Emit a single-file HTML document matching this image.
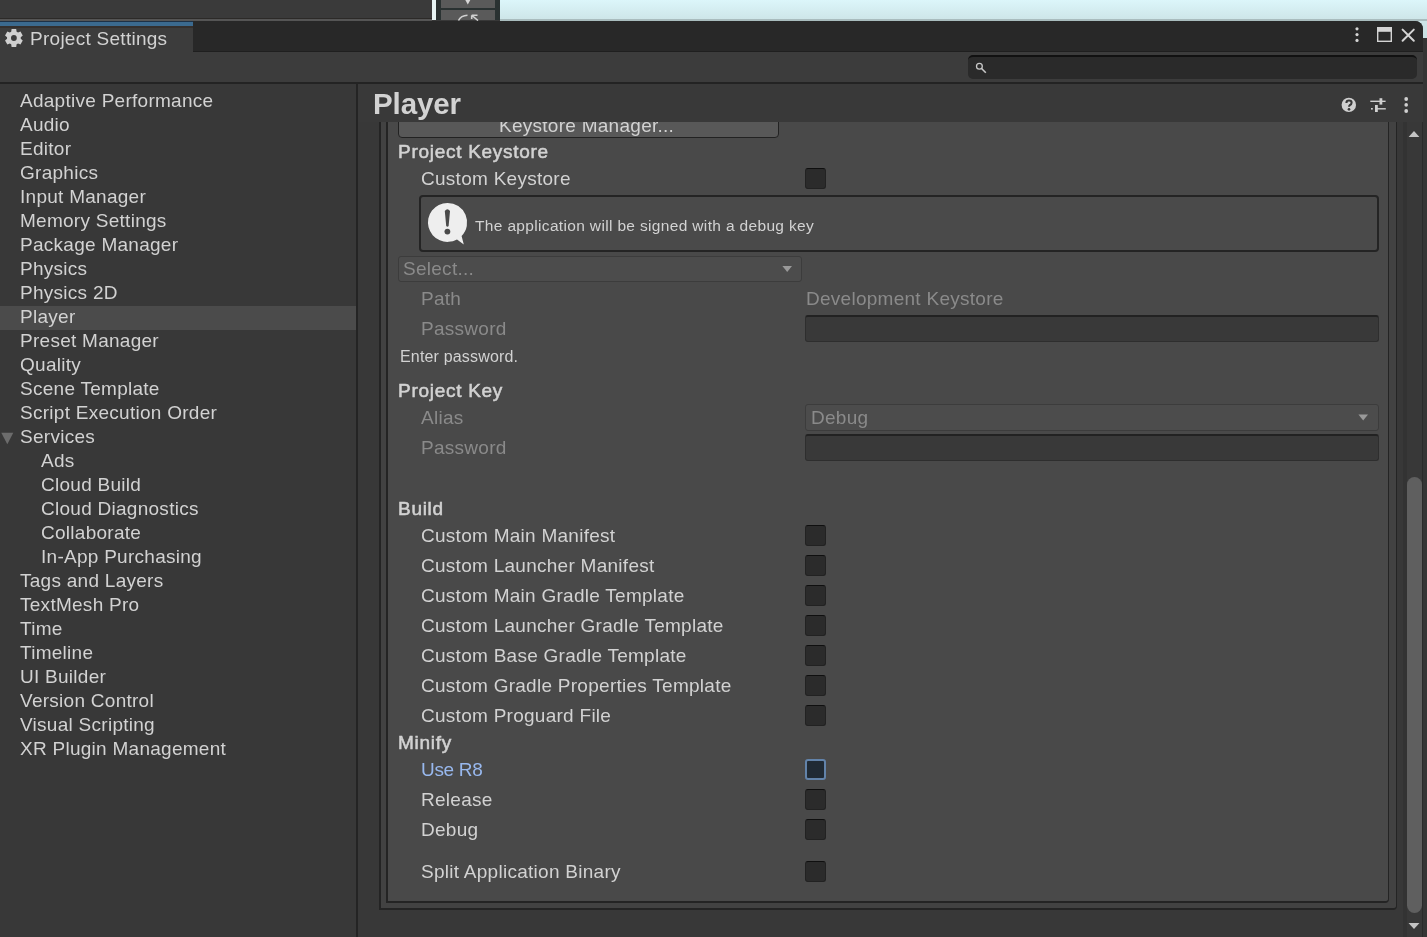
<!DOCTYPE html>
<html><head><meta charset="utf-8">
<style>
*{margin:0;padding:0;box-sizing:border-box}
html,body{width:1427px;height:937px;overflow:hidden;background:#383838;font-family:"Liberation Sans",sans-serif;color:#d2d2d2}
.a{position:absolute}
.t{position:absolute;will-change:transform;white-space:pre;font-size:19px;letter-spacing:0.27px;line-height:24px}
.b{font-weight:normal;letter-spacing:0.72px;-webkit-text-stroke:0.55px currentColor}
.dis{color:#8a8a8a}
.cb{position:absolute;left:805px;width:21px;height:21px;background:#2b2b2b;border:1px solid #222;border-top-color:#0f0f0f;border-radius:3px}
</style></head><body>
<div class="a" style="left:0;top:0;width:432px;height:20px;background:#3a3a3a"></div>
<div class="a" style="left:432px;top:0;width:4px;height:20px;background:#e6f4f4"></div>
<div class="a" style="left:436px;top:0;width:64px;height:20px;background:#2a3232"></div>
<div class="a" style="left:441px;top:0;width:54px;height:8px;background:#5a5a5a"></div>
<div class="a" style="left:441px;top:9.5px;width:54px;height:10.5px;background:#5a5a5a"></div>
<svg class="a" style="left:0;top:0" width="500" height="21"><path d="M465.3,0 L467.8,4.5 L470.3,0 Z" fill="#d8d8d8"/><path d="M458.5,20.5 Q461,15.5 467.5,15.2" stroke="#d0d0d0" stroke-width="1.6" fill="none"/><path d="M472,15.5 L478,20.5 M471.7,15.3 H477.5 M471.7,15.3 V19" stroke="#d0d0d0" stroke-width="1.6" fill="none"/></svg>
<div class="a" style="left:500px;top:0;width:927px;height:40px;background:linear-gradient(#dcf6fa,#cde5e8 50%,#c8dee0)"></div>
<div class="a" style="left:0;top:18px;width:432px;height:1px;background:#2c2a28"></div>
<div class="a" style="left:0;top:19px;width:432px;height:2px;background:#555"></div>
<div class="a" style="left:500px;top:19px;width:927px;height:2px;background:#a9bcbe"></div>
<div class="a" style="left:1423px;top:38px;width:4px;height:899px;background:#353535"></div>
<div class="a" style="left:0;top:21px;width:1423px;height:916px;background:#383838;border-top-right-radius:8px;overflow:hidden">
 <div class="a" style="left:0;top:0;width:1423px;height:31px;background:#282828"></div>
 <div class="a" style="left:0;top:0;width:193px;height:31px;background:#3c3c3c"></div>
 <div class="a" style="left:0;top:0;width:193px;height:1px;background:#1d3147"></div>
 <div class="a" style="left:0;top:1px;width:193px;height:4px;background:#3b6a8f"></div>
 <div class="a" style="left:0;top:5px;width:193px;height:2px;background:#34302e"></div>
 <div class="a" style="left:0;top:31px;width:1423px;height:30px;background:#3c3c3c"></div>
 <div class="a" style="left:193px;top:30px;width:1230px;height:1px;background:#1f1f1f"></div>
 <div class="a" style="left:0;top:61px;width:1423px;height:2px;background:#232323"></div>
</div>
<div class="t" style="left:29.5px;top:27px">Project Settings</div>
<div class="a" style="left:968px;top:55px;width:449px;height:24px;background:#2a2a2a;border-radius:5px;border-top:2px solid #111"></div>
<div class="a" style="left:0;top:306px;width:356px;height:24px;background:#4b4b4b"></div>
<div class="a" style="left:356px;top:84px;width:2px;height:853px;background:#242424"></div>
<div class="t" style="left:20px;top:89px">Adaptive Performance</div>
<div class="t" style="left:20px;top:113px">Audio</div>
<div class="t" style="left:20px;top:137px">Editor</div>
<div class="t" style="left:20px;top:161px">Graphics</div>
<div class="t" style="left:20px;top:185px">Input Manager</div>
<div class="t" style="left:20px;top:209px">Memory Settings</div>
<div class="t" style="left:20px;top:233px">Package Manager</div>
<div class="t" style="left:20px;top:257px">Physics</div>
<div class="t" style="left:20px;top:281px">Physics 2D</div>
<div class="t" style="left:20px;top:305px">Player</div>
<div class="t" style="left:20px;top:329px">Preset Manager</div>
<div class="t" style="left:20px;top:353px">Quality</div>
<div class="t" style="left:20px;top:377px">Scene Template</div>
<div class="t" style="left:20px;top:401px">Script Execution Order</div>
<div class="t" style="left:20px;top:425px">Services</div>
<div class="t" style="left:41px;top:449px">Ads</div>
<div class="t" style="left:41px;top:473px">Cloud Build</div>
<div class="t" style="left:41px;top:497px">Cloud Diagnostics</div>
<div class="t" style="left:41px;top:521px">Collaborate</div>
<div class="t" style="left:41px;top:545px">In-App Purchasing</div>
<div class="t" style="left:20px;top:569px">Tags and Layers</div>
<div class="t" style="left:20px;top:593px">TextMesh Pro</div>
<div class="t" style="left:20px;top:617px">Time</div>
<div class="t" style="left:20px;top:641px">Timeline</div>
<div class="t" style="left:20px;top:665px">UI Builder</div>
<div class="t" style="left:20px;top:689px">Version Control</div>
<div class="t" style="left:20px;top:713px">Visual Scripting</div>
<div class="t" style="left:20px;top:737px">XR Plugin Management</div>
<div class="a" style="left:358px;top:121px;width:1065px;height:816px;background:#383838"></div>
<div class="a" style="left:379px;top:100px;width:1018px;height:810px;background:#424242;border:1px solid #242424;border-left-width:2px;border-bottom-width:2px;border-bottom-right-radius:4px"></div>
<div class="a" style="left:386px;top:100px;width:1003px;height:803px;background:#494949;border:1px solid #242424;border-left-width:2px;border-bottom-width:2px;border-bottom-right-radius:4px"></div>
<div class="a" style="left:0;top:0;width:1427px;height:937px;clip-path:inset(122px 0 0 0)">
<div class="a" style="left:398px;top:114px;width:381px;height:24px;background:#585858;border:1px solid #222;border-radius:4px"></div>
<div class="t" style="left:499px;top:114px">Keystore Manager...</div>
<div class="t b" style="left:398px;top:140px">Project Keystore</div>
<div class="t" style="left:421px;top:167px">Custom Keystore</div>
<div class="cb" style="top:168px"></div>
<div class="a" style="left:419px;top:195px;width:960px;height:57px;border:2px solid #242424;border-radius:4px;background:#4a4a4a"></div>
<div class="t" style="left:475px;top:213.5px;font-size:15.5px;letter-spacing:0.34px">The application will be signed with a debug key</div>
<div class="a" style="left:398px;top:256px;width:404px;height:26px;background:#4c4c4c;border:1px solid #3c3c3c;border-radius:3px"></div>
<div class="t dis" style="left:403px;top:257px">Select...</div>
<div class="t dis" style="left:421px;top:287px">Path</div>
<div class="t dis" style="left:806px;top:287px">Development Keystore</div>
<div class="t dis" style="left:421px;top:317px">Password</div>
<div class="a" style="left:805px;top:315px;width:574px;height:27px;background:#393939;border:1px solid #2e2e2e;border-top:2px solid #222;border-radius:3px"></div>
<div class="t" style="left:400px;top:345px;font-size:16px;letter-spacing:0.17px">Enter password.</div>
<div class="t b" style="left:398px;top:379px">Project Key</div>
<div class="t dis" style="left:421px;top:406px">Alias</div>
<div class="a" style="left:805px;top:404px;width:574px;height:27px;background:#4c4c4c;border:1px solid #3c3c3c;border-radius:3px"></div>
<div class="t dis" style="left:811px;top:406px">Debug</div>
<div class="t dis" style="left:421px;top:436px">Password</div>
<div class="a" style="left:805px;top:434px;width:574px;height:27px;background:#393939;border:1px solid #2e2e2e;border-top:2px solid #222;border-radius:3px"></div>
<div class="t b" style="left:398px;top:497px">Build</div>
<div class="t" style="left:421px;top:524px">Custom Main Manifest</div>
<div class="cb" style="top:525px"></div>
<div class="t" style="left:421px;top:554px">Custom Launcher Manifest</div>
<div class="cb" style="top:555px"></div>
<div class="t" style="left:421px;top:584px">Custom Main Gradle Template</div>
<div class="cb" style="top:585px"></div>
<div class="t" style="left:421px;top:614px">Custom Launcher Gradle Template</div>
<div class="cb" style="top:615px"></div>
<div class="t" style="left:421px;top:644px">Custom Base Gradle Template</div>
<div class="cb" style="top:645px"></div>
<div class="t" style="left:421px;top:674px">Custom Gradle Properties Template</div>
<div class="cb" style="top:675px"></div>
<div class="t" style="left:421px;top:704px">Custom Proguard File</div>
<div class="cb" style="top:705px"></div>
<div class="t b" style="left:398px;top:731px">Minify</div>
<div class="t" style="left:421px;top:758px;color:#98b8ee;letter-spacing:-0.3px">Use R8</div>
<div class="cb" style="top:759px;border:2px solid #6283aa;background:#202a34"></div>
<div class="t" style="left:421px;top:788px">Release</div>
<div class="cb" style="top:789px"></div>
<div class="t" style="left:421px;top:818px">Debug</div>
<div class="cb" style="top:819px"></div>
<div class="t" style="left:421px;top:860px">Split Application Binary</div>
<div class="cb" style="top:861px"></div>
<svg class="a" style="left:0;top:0" width="1427" height="937" viewBox="0 0 1427 937">
  <path d="M447.4,202.9 a19.5,19.5 0 1,0 9.6,36.5 l6.8,5.2 l-2.2,-8.6 a19.5,19.5 0 0,0 -14.2,-33.1 z" fill="#eeeeee"/>
  <path d="M444.8,211 Q447.4,207.5 450,211 L448.6,226 Q447.4,227.5 446.2,226 z" fill="#4a4a4a"/>
  <circle cx="447.4" cy="231.6" r="2.9" fill="#4a4a4a"/>
  <path d="M782.4,266 H792 L787.2,272 z" fill="#999"/>
  <path d="M1358.4,414.5 H1368 L1363.2,420.5 z" fill="#999"/>
</svg>
</div>
<div class="a" style="left:358px;top:84px;width:1065px;height:38px;background:#393939"></div>
<div class="t" style="left:373px;top:87px;font-size:29.5px;line-height:34px;font-weight:bold;letter-spacing:-0.1px">Player</div>
<div class="a" style="left:1403px;top:122px;width:4px;height:815px;background:#333333"></div>
<div class="a" style="left:1422px;top:122px;width:1px;height:815px;background:#2a2a2a"></div>
<div class="a" style="left:1407px;top:477px;width:15px;height:436px;background:#5f5f5f;border-radius:8px"></div>
<svg class="a" style="left:0;top:0" width="1427" height="937" viewBox="0 0 1427 937">
  <path d="M11.20,31.65 L11.60,29.09 L16.20,29.09 L16.60,31.65 L18.05,32.49 L20.46,31.55 L22.76,35.54 L20.75,37.16 L20.75,38.84 L22.76,40.46 L20.46,44.45 L18.05,43.51 L16.60,44.35 L16.20,46.91 L11.60,46.91 L11.20,44.35 L9.75,43.51 L7.34,44.45 L5.04,40.46 L7.05,38.84 L7.05,37.16 L5.04,35.54 L7.34,31.55 L9.75,32.49 Z M11.00,38.00 a2.90,2.90 0 1,0 5.80,0 a2.90,2.90 0 1,0 -5.80,0 Z" fill="#d0d0d0" fill-rule="evenodd"/>
  <g fill="#d4d4d4">
    <circle cx="1357" cy="28.8" r="1.6"/><circle cx="1357" cy="34.6" r="1.6"/><circle cx="1357" cy="40.4" r="1.6"/>
  </g>
  <rect x="1377.7" y="27.7" width="13.6" height="13.6" fill="none" stroke="#d4d4d4" stroke-width="1.4"/>
  <rect x="1377" y="27" width="15" height="4.8" fill="#d4d4d4"/>
  <path d="M1402.6,29.6 L1413.8,40.8 M1413.8,29.6 L1402.6,40.8" stroke="#d4d4d4" stroke-width="2" stroke-linecap="round"/>
  <circle cx="979.4" cy="66.3" r="2.9" fill="none" stroke="#c8c8c8" stroke-width="1.3"/>
  <path d="M981.6,68.5 L985.8,72.7" stroke="#c8c8c8" stroke-width="1.6"/>
  <path d="M1.3,432.8 L13.3,432.8 L7.3,444.3 z" fill="#6c6c6c"/>
  <circle cx="1348.8" cy="104.9" r="7.2" fill="#d0d0d0"/>
  <path d="M1346.4,102.9 Q1346.4,100.5 1349,100.5 Q1351.6,100.5 1351.6,102.7 Q1351.5,104.4 1349.6,105.3 Q1349.1,105.6 1349.1,106.8" fill="none" stroke="#393939" stroke-width="2.1"/><circle cx="1349" cy="109.3" r="1.35" fill="#393939"/>
  <g stroke="#d0d0d0" fill="#d0d0d0">
    <path d="M1370.3,101.3 H1385.6" stroke-width="1.4"/>
    <rect x="1379.5" y="98.2" width="2.8" height="6.4" stroke="none"/>
    <path d="M1377,108.8 H1385.8" stroke-width="1.4"/>
    <rect x="1375" y="105" width="2.8" height="7" stroke="none"/>
    <rect x="1371" y="108" width="1.8" height="1.6" stroke="none"/>
  </g>
  <g fill="#d0d0d0">
    <circle cx="1406.2" cy="99" r="1.9"/><circle cx="1406.2" cy="104.9" r="1.8"/><circle cx="1406.2" cy="111" r="1.9"/>
  </g>
  <path d="M1408.6,137 H1419.4 L1414,131 z" fill="#c4c4c4"/>
  <path d="M1408.5,923 H1419.5 L1414,929 z" fill="#c4c4c4"/>
</svg>
</body></html>
